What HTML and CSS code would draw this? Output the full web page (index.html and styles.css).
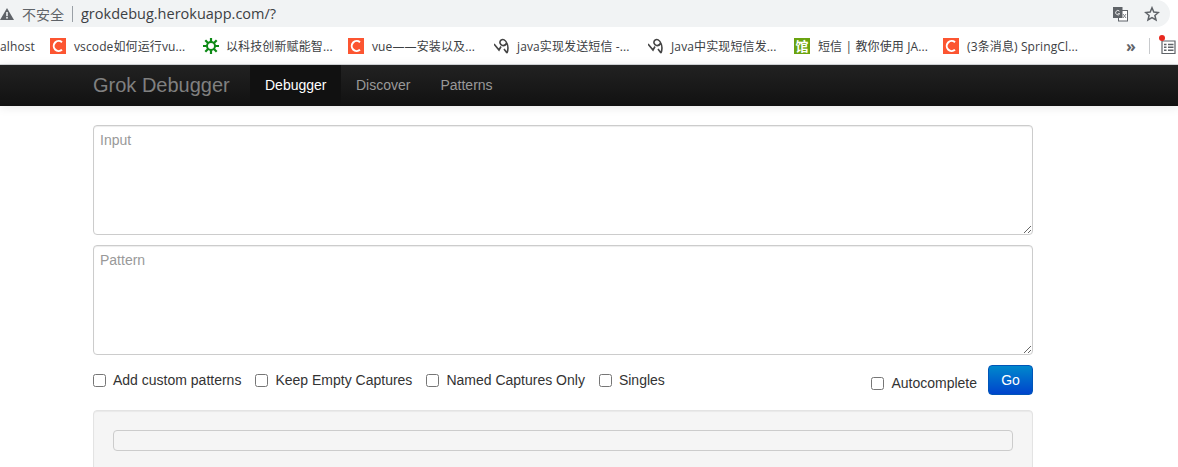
FILE: index.html
```html
<!DOCTYPE html>
<html lang="zh">
<head>
<meta charset="utf-8">
<title>Grok Debugger</title>
<link rel="stylesheet" href="styles.css">
</head>
<body>
<div class="chrome-top">
  <div class="omnibox">
    <svg class="warn" width="14" height="14" viewBox="0 0 14 14"><path d="M7 1 14 13H0z" fill="#5f6368"/><rect x="6.200" y="5" width="1.600" height="4.200" fill="#f1f3f4"/><rect x="6.200" y="10" width="1.600" height="1.600" fill="#f1f3f4"/></svg>
    <span class="insecure">不安全</span>
    <span class="sep"></span>
    <span class="url">grokdebug.herokuapp.com/?</span>
    <span class="spacer"></span>
    <svg class="translate" width="16" height="16" viewBox="0 0 16 16"><rect x="6.500" y="4.500" width="9" height="10.500" fill="#fff" stroke="#5f6368"/><rect x="1" y="1" width="9.500" height="11" fill="#5f6368"/><path d="M7.500 5.200a2.200 2.200 0 1 0 .3 2.500H5.800" fill="none" stroke="#e8e8e8" stroke-width="1"/><path d="M11 8l3 4M14 8l-3 4" stroke="#7d8186" stroke-width="1" fill="none"/></svg>
    <svg class="star" width="16" height="16" viewBox="0 0 16 16"><path d="M8 1.800l1.800 4.300 4.600.4-3.500 3 1.100 4.500L8 11.600 4 14l1.100-4.500-3.500-3 4.600-.4z" fill="none" stroke="#5f6368" stroke-width="1.500"/></svg>
  </div>
</div>
<div class="bookmarks">
  <span class="bm-local">alhost</span>
  <span class="bm b1"><svg class="fav" width="16" height="16" viewBox="0 0 16 16"><rect width="16" height="16" fill="#fc5531"/><path d="M12 4.200a5 5 0 1 0 0 7.600" fill="none" stroke="#fff" stroke-width="2"/></svg>vscode如何运行vu...</span>
  <span class="bm b2"><svg class="fav" width="16" height="16" viewBox="0 0 16 16"><circle cx="8" cy="8" r="4" fill="none" stroke="#0e8a16" stroke-width="2"/><path d="M8 0v4M8 12v4M0 8h4M12 8h4M2.300 2.300l3 3M10.700 10.700l3 3M13.700 2.300l-3 3M5.300 10.700l-3 3" stroke="#0e8a16" stroke-width="2.200"/></svg>以科技创新赋能智...</span>
  <span class="bm b3"><svg class="fav" width="16" height="16" viewBox="0 0 16 16"><rect width="16" height="16" fill="#fc5531"/><path d="M12 4.200a5 5 0 1 0 0 7.600" fill="none" stroke="#fff" stroke-width="2"/></svg>vue——安装以及...</span>
  <span class="bm b4"><svg class="fav" width="16" height="16" viewBox="0 0 16 16"><path d="M0 6l5 6 2-3.500M13 15c1.500-4 1-7.500-.2-10C11.500 2 9 .5 7 2.200S6 7 8.500 7.500 12 6.500 12.800 5M13 15l-3-4" fill="none" stroke="#444" stroke-width="1.600"/></svg>java实现发送短信 -...</span>
  <span class="bm b5"><svg class="fav" width="16" height="16" viewBox="0 0 16 16"><path d="M0 6l5 6 2-3.500M13 15c1.500-4 1-7.500-.2-10C11.500 2 9 .5 7 2.200S6 7 8.500 7.500 12 6.500 12.800 5M13 15l-3-4" fill="none" stroke="#444" stroke-width="1.600"/></svg>Java中实现短信发...</span>
  <span class="bm b6"><span class="fav fav-green">馆</span>短信 | 教你使用 JA...</span>
  <span class="bm b7"><svg class="fav" width="16" height="16" viewBox="0 0 16 16"><rect width="16" height="16" fill="#fc5531"/><path d="M12 4.200a5 5 0 1 0 0 7.600" fill="none" stroke="#fff" stroke-width="2"/></svg>(3条消息) SpringCl...</span>
  <span class="spacer"></span>
  <span class="more">»</span>
  <span class="bm-sep"></span>
  <span class="reading">
    <svg width="16" height="16" viewBox="0 0 16 16"><path d="M2 3h13v12.500H2z" fill="#fff" stroke="#5f6368" stroke-width="1.200"/><path d="M4 6.500h2.500M8 6.500h5.500M4 9.300h2.500M8 9.300h5.500M4 12.200h2.500M8 12.200h5.500" stroke="#5f6368" stroke-width="1.500"/></svg>
    <span class="dot"></span>
  </span>
</div>
<nav class="navbar">
  <span class="brand">Grok Debugger</span>
  <a class="nav-link active">Debugger</a>
  <a class="nav-link">Discover</a>
  <a class="nav-link">Patterns</a>
</nav>
<main class="container">
  <textarea class="field" placeholder="Input"></textarea>
  <textarea class="field" placeholder="Pattern"></textarea>
  <div class="options">
    <label class="check"><input type="checkbox">Add custom patterns</label>
    <label class="check"><input type="checkbox">Keep Empty Captures</label>
    <label class="check"><input type="checkbox">Named Captures Only</label>
    <label class="check"><input type="checkbox">Singles</label>
    <span class="spacer"></span>
    <label class="check auto"><input type="checkbox">Autocomplete</label>
    <button class="go">Go</button>
  </div>
  <div class="well"><div class="output"></div></div>
</main>
</body>
</html>
```
FILE: styles.css
```css
* { box-sizing: border-box; }
html, body { margin: 0; padding: 0; height: 467px; overflow: hidden; background: #fff; }
body { font-family: "Liberation Sans", Arial, sans-serif; font-size: 14px; color: #333; }
.spacer { flex: 1; }

.chrome-top { height: 28px; background: #fff; padding-right: 8px; }
.omnibox { height: 27px; background: #f1f3f4; border-radius: 0 14px 14px 0; display: flex; align-items: center; padding: 0 10px 0 0; color: #5f6368; }
.warn { margin-right: 8px; }
.insecure { font: 14px "Noto Sans CJK SC", sans-serif; color: #5f6368; width: 42px; white-space: nowrap; }
.sep { width: 1px; height: 16px; background: #9aa0a6; margin: 0 8px 0 8px; }
.url { font: 14.500px "Open Sans", "Liberation Sans", sans-serif; color: #3c4043; }
.translate { margin-right: 16px; }

.bookmarks { height: 37px; background: #fff; border-bottom: 1px solid #d5d7da; display: flex; align-items: center; font: 12px "Open Sans", "Noto Sans CJK SC", sans-serif; letter-spacing: .12px; color: #3c4043; white-space: nowrap; }
.bm-local { width: 50px; }
.bm { display: flex; align-items: center; gap: 8px; }
.fav { flex: none; width: 16px; height: 16px; }
.fav-green { background: #6aa30f; color: #fff; font-size: 13px; font-weight: 700; line-height: 16px; text-align: center; font-family: "Noto Sans CJK SC", sans-serif; }
.b1 { width: 153px; }
.b2 { width: 145px; }
.b3 { width: 146px; }
.b4 { width: 154px; }
.b5 { width: 146px; }
.b6 { width: 149px; }
.b2, .b4, .b5 { gap: 7px; }
.more { font-size: 16px; font-weight: 700; color: #5f6368; line-height: 16px; margin-right: 13px; }
.bm-sep { width: 1px; height: 16px; background: #c8cacd; margin-right: 10px; }
.reading { position: relative; display: flex; margin-right: 2px; }
.dot { position: absolute; left: -1px; top: -3px; width: 6px; height: 6px; border-radius: 50%; background: #e8281e; }

.navbar { height: 41px; background: linear-gradient(#222, #111); display: flex; align-items: stretch; padding-left: 93px; box-shadow: 0 1px 10px rgba(0,0,0,.1); line-height: 41px; }
.brand { font-size: 20px; color: #808080; width: 157px; }
.nav-link { color: #999; padding: 0 15px; }
.nav-link.active { color: #fff; background: #111; width: 91px; }

.container { width: 940px; margin: 19px 0 0 93px; }
.field { display: block; width: 940px; height: 110px; margin: 0 0 10px; padding: 4px 6px; border: 1px solid #ccc; border-radius: 4px; font: 14px/20px "Liberation Sans", Arial, sans-serif; box-shadow: inset 0 1px 1px rgba(0,0,0,.075); outline: 0; background: #fff; }
.field::placeholder { color: #999; opacity: 1; }
.options { display: flex; align-items: flex-start; height: 45px; }
.check { display: flex; align-items: center; height: 30px; margin-right: 14px; color: #333; line-height: 20px; }
.check input { margin: 0 7px 0 0; width: 13px; height: 13px; flex: none; }
.check.auto { margin: 3px 11px 0 0; }
.go { width: 45px; height: 30px; padding: 0; border: 1px solid #0055b8; border-radius: 4px; background: linear-gradient(#0088cc, #0044cc); color: #fff; font: 14px "Liberation Sans", Arial, sans-serif; }
.well { height: 80px; padding: 19px; background: #f5f5f5; border: 1px solid #e3e3e3; border-radius: 4px; box-shadow: inset 0 1px 1px rgba(0,0,0,.05); }
.output { height: 21px; border: 1px solid #ccc; border-radius: 4px; background: #f5f5f5; }
```
